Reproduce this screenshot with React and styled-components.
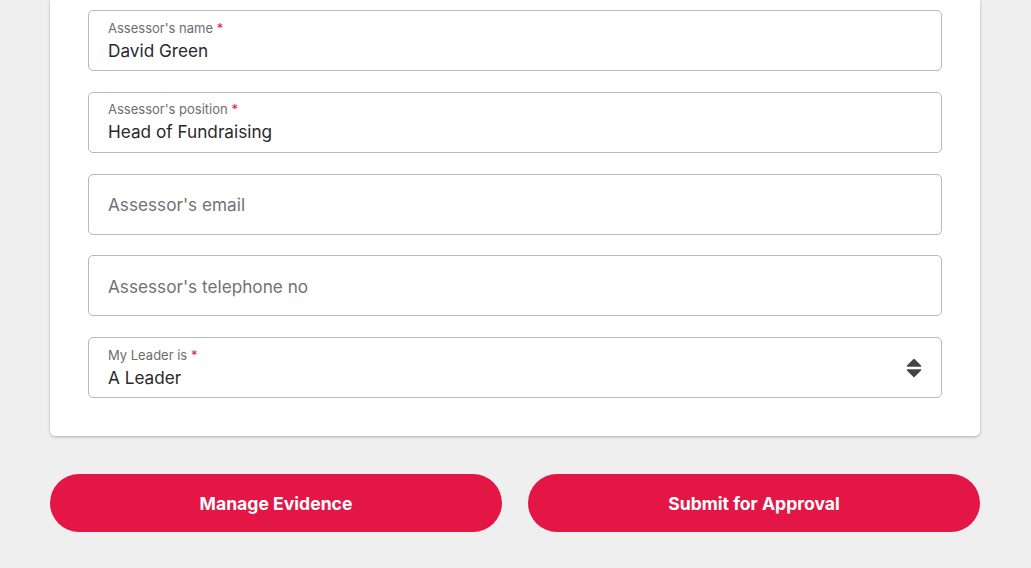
import React from 'react';
import styled, { createGlobalStyle } from 'styled-components';

const Global = createGlobalStyle`
  html, body {
    margin: 0;
    padding: 0;
    background: #efefef;
    font-family: Inter, "Noto Sans", Roboto, sans-serif;
  }
`;

const Page = styled.div`
  padding: 0 51px 0 50px;
`;

const Card = styled.div`
  background: #fff;
  border-radius: 0 0 5px 5px;
  box-shadow: 0 1px 3px rgba(0, 0, 0, 0.28);
  padding: 10px 38px 38px;
  display: flex;
  flex-direction: column;
  gap: 20.75px;
`;

const Field = styled.div`
  position: relative;
  height: 61px;
  box-sizing: border-box;
  border: 1px solid #b9b9b9;
  border-radius: 5px;
  padding: 0 19px;
  display: flex;
  flex-direction: column;
  justify-content: center;
`;

const Label = styled.div`
  font-size: 13px;
  line-height: 16px;
  color: #6d6d6d;
  span {
    color: #e3173f;
  }
`;

const Value = styled.div`
  font-size: 17.2px;
  line-height: 22px;
  color: ${p => (p.placeholder ? '#727272' : '#2a2a2a')};
  margin-top: ${p => (p.placeholder ? '2px' : '4px')};
`;

const Arrows = styled.svg`
  position: absolute;
  right: 19px;
  top: 50%;
  transform: translateY(-50%);
`;

const Buttons = styled.div`
  display: grid;
  grid-template-columns: 1fr 1fr;
  gap: 26px;
  margin-top: 38px;
`;

const Button = styled.button`
  height: 58px;
  border: none;
  border-radius: 29px;
  background: #e31645;
  color: #fff;
  font-family: inherit;
  font-size: 17.6px;
  font-weight: 700;
  cursor: pointer;
`;

const TextField = ({ label, value, required }) => (
  <Field>
    {value ? (
      <>
        <Label>
          {label} {required && <span>*</span>}
        </Label>
        <Value>{value}</Value>
      </>
    ) : (
      <Value placeholder="true">{label}</Value>
    )}
  </Field>
);

export default function App() {
  return (
    <>
      <Global />
      <Page>
        <Card>
          <TextField label="Assessor's name" value="David Green" required />
          <TextField label="Assessor's position" value="Head of Fundraising" required />
          <TextField label="Assessor's email" />
          <TextField label="Assessor's telephone no" />
          <Field>
            <Label>
              My Leader is <span>*</span>
            </Label>
            <Value>A Leader</Value>
            <Arrows width="16" height="20" viewBox="0 0 16 20">
              <path d="M8 1.5 L14.5 8 H1.5 Z" fill="#444" strokeLinejoin="round" stroke="#444" strokeWidth="1.5" />
              <path d="M8 18.5 L14.5 12 H1.5 Z" fill="#444" strokeLinejoin="round" stroke="#444" strokeWidth="1.5" />
            </Arrows>
          </Field>
        </Card>
        <Buttons>
          <Button>Manage Evidence</Button>
          <Button>Submit for Approval</Button>
        </Buttons>
      </Page>
    </>
  );
}
